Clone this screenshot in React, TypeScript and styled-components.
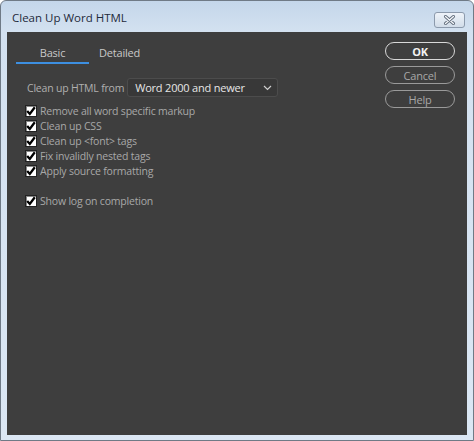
import React, { useState } from 'react';
import styled, { createGlobalStyle } from 'styled-components';

const GlobalStyle = createGlobalStyle`
	html, body {
		margin: 0;
		padding: 0;
		background: #ffffff;
	}
	* {
		box-sizing: border-box;
	}
`;

const FONT = `'Open Sans', 'Noto Sans', sans-serif`;

type TOption = { label: string; checked: boolean };

const cleanupOptions: TOption[] = [
	{ label: 'Remove all word specific markup', checked: true },
	{ label: 'Clean up CSS', checked: true },
	{ label: 'Clean up <font> tags', checked: true },
	{ label: 'Fix invalidly nested tags', checked: true },
	{ label: 'Apply source formatting', checked: true },
];

function CheckBox({ label, checked }: TOption) {
	return (
		<CheckRow>
			<Box>
				{checked && (
					<svg width="10" height="10" viewBox="0 0 10 10">
						<path
							d="M1.2 5 L3.8 8 L8.8 1.2"
							fill="none"
							stroke="#000"
							strokeWidth="2.3"
						/>
					</svg>
				)}
			</Box>
			<CheckText>{label}</CheckText>
		</CheckRow>
	);
}

export default function App() {
	const [tab, setTab] = useState('basic');

	return (
		<>
			<GlobalStyle />
			<Window>
				<TitleBar>
					<Title>Clean Up Word HTML</Title>
					<CloseButton>
						<svg width="13" height="10" viewBox="0 0 13 10">
							<path
								d="M2.5 1.5 L10.5 8.5 M10.5 1.5 L2.5 8.5"
								stroke="#5f6b7a"
								strokeWidth="3"
								strokeLinecap="round"
							/>
							<path
								d="M2.5 1.5 L10.5 8.5 M10.5 1.5 L2.5 8.5"
								stroke="#f4f6f9"
								strokeWidth="1.3"
								strokeLinecap="round"
							/>
						</svg>
					</CloseButton>
				</TitleBar>
				<Panel>
					<Main>
						<Tabs>
							<Tab $width={73} $active={tab === 'basic'} onClick={() => setTab('basic')}>
								Basic
							</Tab>
							<Tab $active={tab === 'detailed'} onClick={() => setTab('detailed')}>
								Detailed
							</Tab>
						</Tabs>
						<FromRow>
							<Label>Clean up HTML from</Label>
							<Select>
								<span>Word 2000 and newer</span>
								<svg width="9" height="6" viewBox="0 0 9 6">
									<path d="M1 1 L4.5 4.5 L8 1" fill="none" stroke="#cfcfcf" strokeWidth="1.2" />
								</svg>
							</Select>
						</FromRow>
						<CheckList>
							{cleanupOptions.map((opt) => (
								<CheckBox key={opt.label} {...opt} />
							))}
						</CheckList>
						<LogRow>
							<CheckBox label="Show log on completion" checked />
						</LogRow>
					</Main>
					<Buttons>
						<PillButton $primary>OK</PillButton>
						<PillButton>Cancel</PillButton>
						<PillButton>Help</PillButton>
					</Buttons>
				</Panel>
			</Window>
		</>
	);
}

const Window = styled.div`
	width: 474px;
	height: 441px;
	display: flex;
	flex-direction: column;
	padding: 0 6px 5px 6px;
	border: 1px solid #6f7a86;
	border-radius: 6px 6px 0 0;
	background: linear-gradient(180deg, #c4d6ea 0px, #d3e1f0 30px, #dbe7f4 100%);
`;

const TitleBar = styled.div`
	height: 31px;
	flex: none;
	display: flex;
	align-items: center;
	justify-content: space-between;
	padding: 1px 2px 0 5px;
`;

const Title = styled.div`
	font-family: ${FONT};
	font-size: 11.5px;
	color: #1e2a3a;
`;

const CloseButton = styled.div`
	width: 31px;
	height: 16px;
	margin-top: 5px;
	display: flex;
	align-items: center;
	justify-content: center;
	border: 1px solid #8c9aac;
	border-radius: 3px;
	background: linear-gradient(180deg, #eef3f9, #d2dde9);
`;

const Panel = styled.div`
	flex: 1;
	display: flex;
	background: #3e3e3e;
	padding: 0 12px 0 9px;
	font-family: ${FONT};
	font-size: 10.5px;
	letter-spacing: -0.2px;
`;

const Main = styled.div`
	flex: 1;
	display: flex;
	flex-direction: column;
`;

const Tabs = styled.div`
	display: flex;
	height: 26px;
	margin-top: 6px;
`;

const Tab = styled.div<{ $active?: boolean; $width?: number }>`
	${(p) => (p.$width ? `width: ${p.$width}px;` : '')}
	display: flex;
	align-items: flex-end;
	justify-content: center;
	padding: 0 10px 2px 10px;
	font-size: 11px;
	color: #c8c8c8;
	cursor: pointer;
	border-bottom: 2px solid ${(p) => (p.$active ? '#3d8fe0' : 'transparent')};
`;

const FromRow = styled.div`
	display: flex;
	align-items: center;
	gap: 3px;
	margin-top: 14px;
	padding-left: 11px;
`;

const Label = styled.div`
	color: #b0b0b0;
`;

const Select = styled.div`
	width: 151px;
	height: 19px;
	display: flex;
	align-items: center;
	justify-content: space-between;
	padding: 0 5px 0 7px;
	border: 1px solid #4c4c4c;
	border-radius: 3px;
	background: #383838;
	font-size: 11px;
	color: #e6e6e6;
`;

const CheckList = styled.div`
	display: flex;
	flex-direction: column;
	margin-top: 6px;
	padding-left: 9px;
`;

const LogRow = styled.div`
	margin-top: 15px;
	padding-left: 9px;
`;

const CheckRow = styled.label`
	display: flex;
	align-items: center;
	height: 15px;
	gap: 3px;
`;

const Box = styled.div`
	width: 12px;
	height: 12px;
	display: flex;
	align-items: center;
	justify-content: center;
	background: #ffffff;
	border: 1px solid #222;
	box-shadow: inset 1px 1px 0 #888;
`;

const CheckText = styled.span`
	color: #a8a8a8;
`;

const Buttons = styled.div`
	display: flex;
	flex-direction: column;
	gap: 6px;
	margin-top: 10px;
	width: 70px;
`;

const PillButton = styled.div<{ $primary?: boolean }>`
	height: 18px;
	display: flex;
	align-items: center;
	justify-content: center;
	border: 1px solid ${(p) => (p.$primary ? '#d8d8d8' : '#9a9a9a')};
	border-radius: 9px;
	font-size: 11px;
	font-weight: ${(p) => (p.$primary ? 700 : 400)};
	color: ${(p) => (p.$primary ? '#f2f2f2' : '#a8a8a8')};
	cursor: pointer;
`;
